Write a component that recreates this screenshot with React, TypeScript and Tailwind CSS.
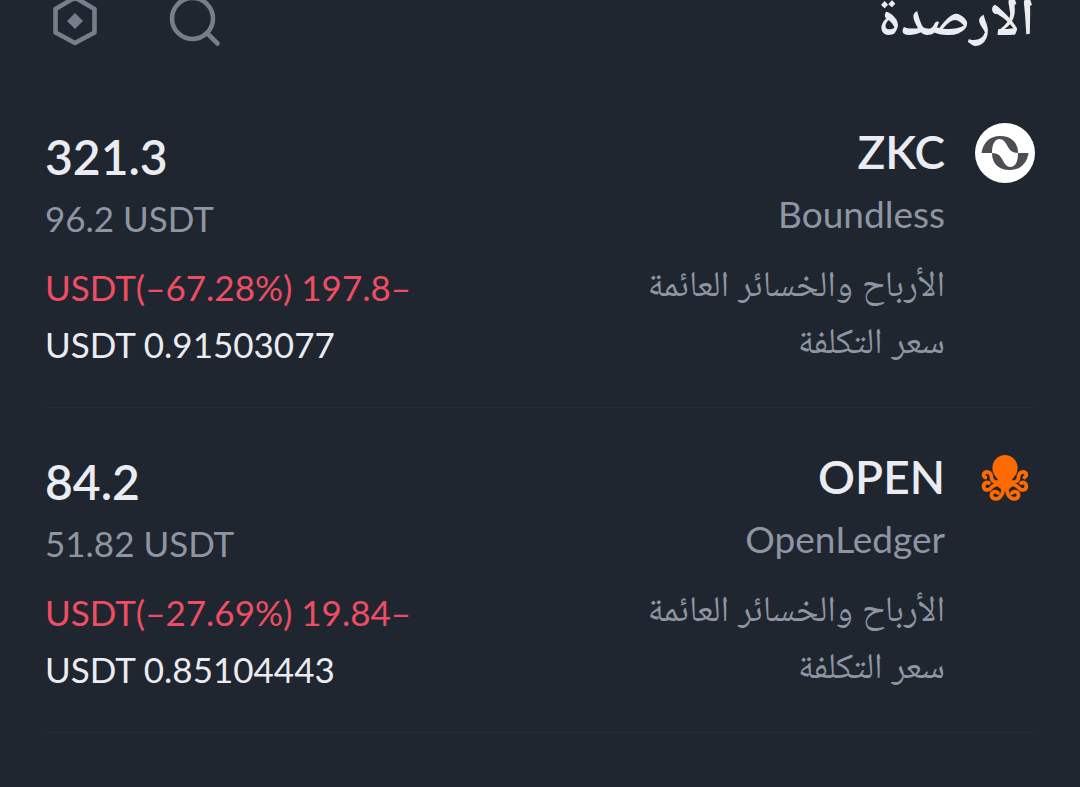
import React from "react";

type Holding = {
  symbol: string;
  name: string;
  amount: string;
  value: string;
  pnl: string;
  cost: string;
  icon: React.ReactNode;
};

function BoundlessIcon() {
  return (
    <svg viewBox="10 8 60 60" className="size-[60px] shrink-0" aria-hidden="true">
      <circle cx="40" cy="38" r="30" fill="#fff" />
      <g fill="#4b4f54">
        <path d="M16.500 38C18 27.500 25 21 35 21C46 21 53 27 53 38C47.500 37.500 45 36 42.700 31.500C40.500 27 38 24 34.500 24C30 24 27 29 27 38Z" />
        <path d="M63.500 38C62 48.500 55 55 45 55C34 55 27 49 27 38C32.500 38.500 35 40 37.300 44.500C39.500 49 42 52 45.500 52C50 52 53 47 53 38Z" />
      </g>
    </svg>
  );
}

function OpenLedgerIcon() {
  const arms = (
    <>
      <path d="M35 42C30 43 26.500 41 26.500 37.500C26.500 33.500 24 31.800 21.500 32C18.500 32.300 17.500 36 20.500 37.500" />
      <path d="M36 44C31 44 28 45.500 26 48C23.500 51 19 50.500 18.700 46.500C18.500 43 21.500 41.800 24 43" />
      <path d="M38 46C38.500 51 37.500 55 34.500 57.500C31.500 60 26.500 59 26.500 55C26.500 51.500 31 50.500 33 53" />
    </>
  );
  return (
    <svg viewBox="10 8 60 60" className="size-[60px] shrink-0" aria-hidden="true">
      <ellipse cx="40" cy="28" rx="12.600" ry="13" fill="#ff6a00" />
      <path d="M30 34H50L47 40L49 45L42 51H38L31 45L33 40Z" fill="#ff6a00" />
      <g fill="none" stroke="#ff6a00" strokeWidth="3.800" strokeLinecap="round">
        {arms}
        <g transform="translate(80 0) scale(-1 1)">{arms}</g>
      </g>
    </svg>
  );
}

const holdings: Holding[] = [
  {
    symbol: "ZKC",
    name: "Boundless",
    amount: "321.3",
    value: "96.2 USDT",
    pnl: "USDT(–67.28%) 197.8–",
    cost: "USDT 0.91503077",
    icon: <BoundlessIcon />,
  },
  {
    symbol: "OPEN",
    name: "OpenLedger",
    amount: "84.2",
    value: "51.82 USDT",
    pnl: "USDT(–27.69%) 19.84–",
    cost: "USDT 0.85104443",
    icon: <OpenLedgerIcon />,
  },
];

function HoldingRow({ h }: { h: Holding }) {
  return (
    <li className="flex items-start justify-between border-b border-[#262d37] pt-4 pb-[34px]">
      <div className="flex gap-[30px]">
        {h.icon}
        <div className="text-[36px] leading-[57px] text-[#8e95a3]">
          <h2 className="text-[46px] font-semibold leading-[57px] text-[#ebecf2]">{h.symbol}</h2>
          <p className="pt-[5px] text-[37px] leading-[57px]">{h.name}</p>
          <p className="pt-3">الأرباح والخسائر العائمة</p>
          <p>سعر التكلفة</p>
        </div>
      </div>
      <div dir="ltr" className="pt-[5px] text-[35px] leading-[57px] text-[#ebecf2]">
        <p className="text-[48px] font-semibold leading-[57px]">{h.amount}</p>
        <p className="pt-[5px] text-[#8e95a3]">{h.value}</p>
        <p className="pt-3 text-[#ef4d63]">{h.pnl}</p>
        <p>{h.cost}</p>
      </div>
    </li>
  );
}

export default function App() {
  return (
    <main
      dir="rtl"
      lang="ar"
      className="min-h-screen overflow-hidden bg-[#1f262f] px-[45px] font-['Lato','Noto_Naskh_Arabic','Noto_Sans_Arabic','DejaVu_Sans',sans-serif]"
    >
      <header className="flex h-[82px] items-start justify-between">
        <h1 className="-mt-[17px] text-[54px] font-bold leading-[64px] text-[#ebecf2]">الأرصدة</h1>
        <div className="flex gap-[60px] text-[#777d8b]">
          <button type="button" aria-label="بحث" className="-mt-2">
            <svg viewBox="0 0 60 60" className="size-[60px]" fill="none" stroke="currentColor" strokeWidth="4.600" strokeLinecap="round">
              <circle cx="27.500" cy="26.500" r="20.500" />
              <path d="M42 41L52.500 51.500" />
            </svg>
          </button>
          <button type="button" aria-label="الإعدادات" className="-mt-2">
            <svg viewBox="0 0 60 60" className="size-[60px]" fill="none" stroke="currentColor" strokeWidth="4.600" strokeLinejoin="round">
              <path d="M30 5.500L49.500 17V40.500L30 51L10.500 40.500V17Z" />
              <path d="M30 21L38 29L30 37L22 29Z" fill="currentColor" stroke="none" />
            </svg>
          </button>
        </div>
      </header>
      <ul className="flex flex-col gap-6 pt-[25px]">
        {holdings.map((h) => (
          <HoldingRow key={h.symbol} h={h} />
        ))}
      </ul>
    </main>
  );
}
